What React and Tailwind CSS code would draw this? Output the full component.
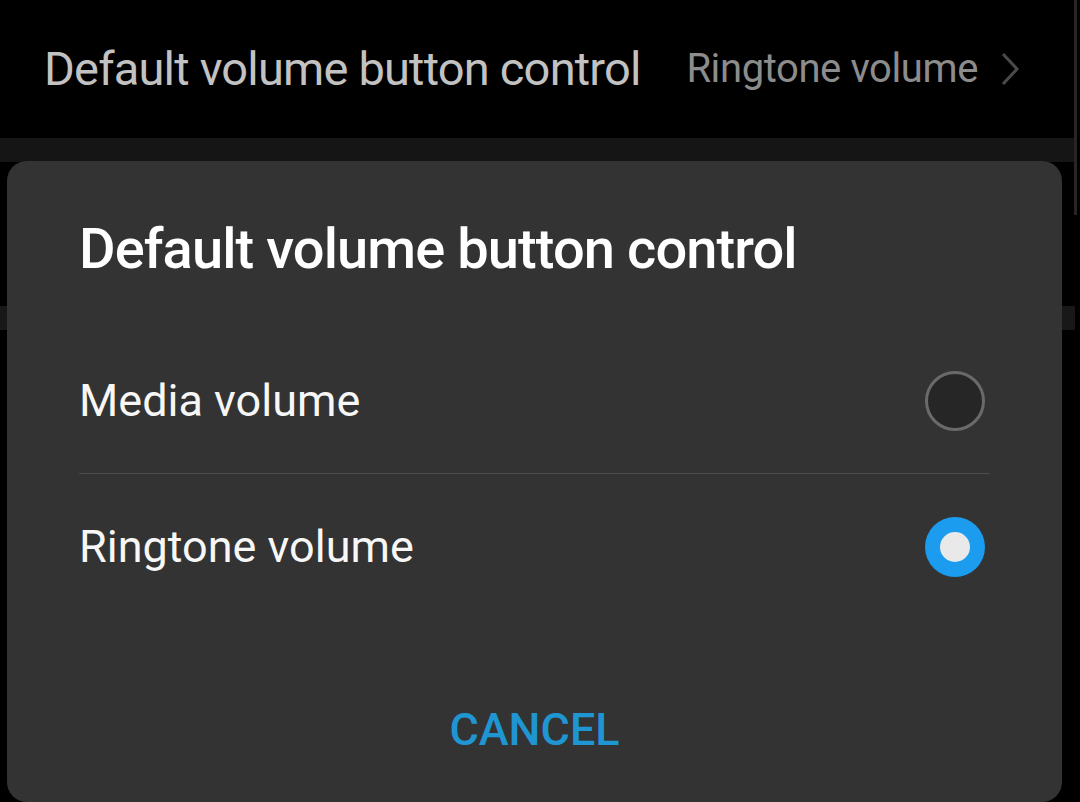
import React from "react";

const Radio = ({ checked }) =>
  checked ? (
    <div className="flex h-[60px] w-[60px] items-center justify-center rounded-full bg-[#1b9cef]">
      <div className="h-[30px] w-[30px] rounded-full bg-[#e9e9e9]"></div>
    </div>
  ) : (
    <div className="h-[60px] w-[60px] rounded-full border-[3px] border-[#6a6a6a] bg-[#262626]"></div>
  );

const options = [
  { label: "Media volume", checked: false },
  { label: "Ringtone volume", checked: true },
];

export default function App() {
  return (
    <div
      className="relative h-[802px] w-[1080px] overflow-hidden bg-black"
      style={{ fontFamily: "Roboto, 'Noto Sans', sans-serif" }}
    >
      {/* settings page behind the dialog */}
      <div className="flex h-[138px] items-center justify-between pl-[44px] pr-[60px]">
        <span className="text-[47px] tracking-[-0.8px] text-[#c2c2c2]">
          Default volume button control
        </span>
        <div className="flex items-center gap-[22px]">
          <span className="text-[40px] tracking-[-0.4px] text-[#8c8c8c]">Ringtone volume</span>
          <svg width="20" height="34" viewBox="0 0 20 34" fill="none">
            <path d="M3 2l14 15L3 32" stroke="#4a4a4a" strokeWidth="3" />
          </svg>
        </div>
      </div>
      <div className="h-[24px] w-[1075px] bg-[#151515]"></div>
      <div className="h-[144px]"></div>
      <div className="h-[24px] w-[1075px] bg-[#181818]"></div>
      <div className="absolute right-[3px] top-0 h-[215px] w-[3px] bg-[#262626]"></div>

      {/* dialog */}
      <div className="absolute left-[7px] top-[161px] flex h-[641px] w-[1055px] flex-col rounded-[20px] bg-[#333333] px-[72px]">
        <h2 className="pt-[56px] text-[56px] font-medium leading-[64px] tracking-[-0.9px] text-white">
          Default volume button control
        </h2>
        <div className="mt-[47px]">
          {options.map((o, i) => (
            <div
              key={o.label}
              className={`flex h-[146px] items-center justify-between ${
                i === 0 ? "border-b border-[#4b4b4b]" : ""
              }`}
            >
              <span className="text-[45px] text-[#f7f7f7]">{o.label}</span>
              <div className="mr-[5px]">
                <Radio checked={o.checked} />
              </div>
            </div>
          ))}
        </div>
        <div className="mt-[84px] text-center text-[45px] font-medium leading-[52px] text-[#1f95d2]">
          CANCEL
        </div>
      </div>
    </div>
  );
}
